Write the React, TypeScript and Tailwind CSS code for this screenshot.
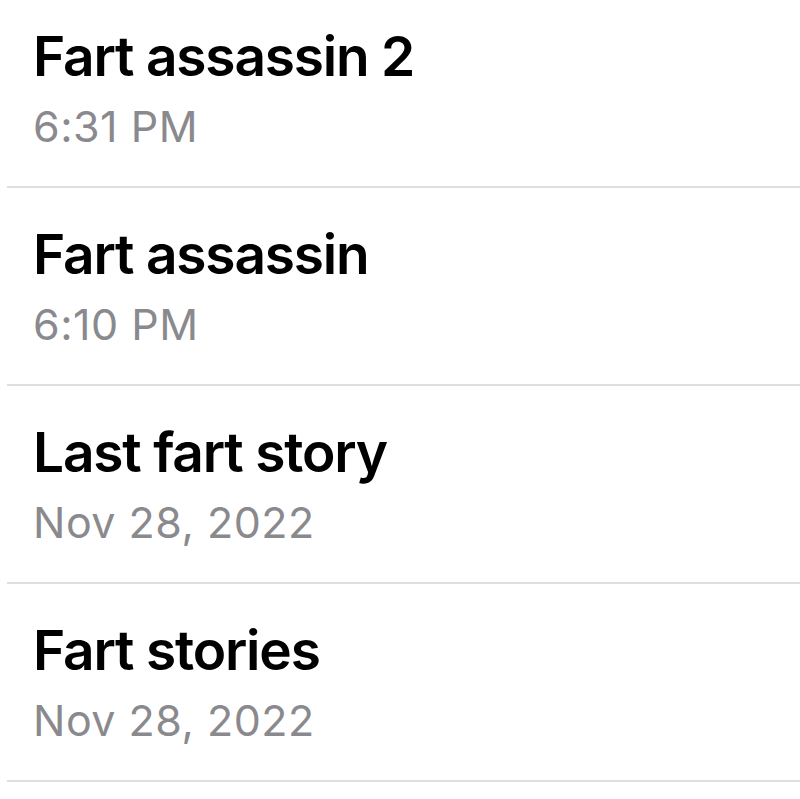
import React from "react";

const items = [
  { title: "Fart assassin 2", date: "6:31 PM" },
  { title: "Fart assassin", date: "6:10 PM" },
  { title: "Last fart story", date: "Nov 28, 2022" },
  { title: "Fart stories", date: "Nov 28, 2022" },
];

export default function App() {
  return (
    <div className="w-[800px] h-[799px] overflow-hidden bg-white" style={{ fontFamily: 'Inter, "Liberation Sans", sans-serif' }}>
      {items.map((it, i) => (
        <div key={i}>
          <div className={`${i === 0 ? "pt-[28px] h-[186px]" : "pt-[38px] h-[196px]"} pl-[33px]`}>
            <div className="text-[55px] leading-[56px] font-semibold text-black tracking-[-1.2px]">{it.title}</div>
            <div className="mt-[20px] text-[43px] leading-[45px] text-[#8a8a8e] tracking-[0.5px]">{it.date}</div>
          </div>
          <div className="ml-[7px] h-[2px] bg-[#dedede]" />
        </div>
      ))}
    </div>
  );
}
